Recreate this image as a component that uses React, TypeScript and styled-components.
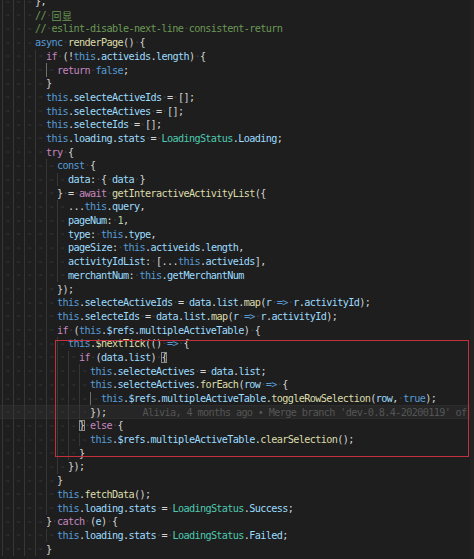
import React from 'react'
import styled, { createGlobalStyle } from 'styled-components'

const Global = createGlobalStyle`
  html, body {
    margin: 0;
    padding: 0;
    background: #1e1e1e;
    overflow: hidden;
  }
`

const colors = {
  kw: '#569cd6',
  ctl: '#c586c0',
  fn: '#dcdcaa',
  id: '#9cdcfe',
  type: '#4ec9b0',
  num: '#b5cea8',
  pun: '#d4d4d4',
  cm: '#6a9955',
  ws: '#3e3e3e',
}

type Kind = keyof typeof colors

const Editor = styled.div`
  position: relative;
  width: 474px;
  height: 559px;
  overflow: hidden;
  background: #1e1e1e;
  font-family: 'DejaVu Sans Mono', 'Liberation Mono', 'Noto Sans CJK SC', monospace;
  font-size: 10.2px;
  letter-spacing: -0.64px;
`

const Lines = styled.div`
  display: flex;
  flex-direction: column;
  margin-top: -5.25px;
`

const Line = styled.div<{ $current?: boolean }>`
  display: flex;
  align-items: center;
  height: 13.7px;
  padding-left: 2px;
  white-space: pre;
  background: ${(p) => (p.$current ? '#262626' : 'transparent')};
  box-shadow: ${(p) => (p.$current ? 'inset 0 1px #2c2c2c, inset 0 -1px #2c2c2c' : 'none')};
`

const Indent = styled.span<{ $active?: boolean }>`
  display: flex;
  align-items: center;
  width: 11px;
  height: 100%;
  flex: none;
  box-sizing: border-box;
  border-left: 1px solid ${(p) => (p.$active ? '#6e6e6e' : '#363636')};
  padding-left: 2px;
  color: #3a3a3a;
  font-size: 7px;
  letter-spacing: 0;
`

const Tok = styled.span<{ $kind: Kind }>`
  color: ${(p) => colors[p.$kind]};
`

const Cjk = styled.span`
  color: ${colors.cm};
  font-family: 'Noto Sans CJK SC', sans-serif;
  font-size: 10px;
  letter-spacing: 0.5px;
`

const Bracket = styled.span`
  color: ${colors.pun};
  outline: 1px solid #8a8a8a;
  outline-offset: -1px;
`

const Blame = styled.span`
  margin-left: 36px;
  color: #555555;
`

const Marker = styled.div`
  position: absolute;
  left: 55px;
  top: 340px;
  width: 414px;
  height: 117px;
  box-sizing: border-box;
  border: 1.5px solid #c3323c;
  pointer-events: none;
`

const Scroll = styled.div`
  position: absolute;
  right: 0;
  top: 0;
  width: 4px;
  height: 100%;
  background: #232323;
`

const keywords = new Set(['async', 'const', 'this', 'false', 'true'])
const control = new Set(['if', 'return', 'try', 'await', 'catch', 'else'])
const types = new Set(['LoadingStatus'])

type Row = {
  level: number
  code: string
  comment?: boolean
  active?: number
  bracket?: 'start' | 'end'
  blame?: string
}

const rows: Row[] = [
  { level: 3, code: '},' },
  { level: 3, code: '// 回显', comment: true },
  { level: 3, code: '// eslint-disable-next-line consistent-return', comment: true },
  { level: 3, code: 'async renderPage() {' },
  { level: 4, code: 'if (!this.activeids.length) {' },
  { level: 5, code: 'return false;', active: 4 },
  { level: 4, code: '}' },
  { level: 4, code: 'this.selecteActiveIds = [];' },
  { level: 4, code: 'this.selecteActives = [];' },
  { level: 4, code: 'this.selecteIds = [];' },
  { level: 4, code: 'this.loading.stats = LoadingStatus.Loading;' },
  { level: 4, code: 'try {' },
  { level: 5, code: 'const {' },
  { level: 6, code: 'data: { data }' },
  { level: 5, code: '} = await getInteractiveActivityList({' },
  { level: 6, code: '...this.query,' },
  { level: 6, code: 'pageNum: 1,' },
  { level: 6, code: 'type: this.type,' },
  { level: 6, code: 'pageSize: this.activeids.length,' },
  { level: 6, code: 'activityIdList: [...this.activeids],' },
  { level: 6, code: 'merchantNum: this.getMerchantNum' },
  { level: 5, code: '});' },
  { level: 5, code: 'this.selecteActiveIds = data.list.map(r => r.activityId);' },
  { level: 5, code: 'this.selecteIds = data.list.map(r => r.activityId);' },
  { level: 5, code: 'if (this.$refs.multipleActiveTable) {' },
  { level: 6, code: 'this.$nextTick(() => {' },
  { level: 7, code: 'if (data.list) {', bracket: 'end' },
  { level: 8, code: 'this.selecteActives = data.list;' },
  { level: 8, code: 'this.selecteActives.forEach(row => {' },
  { level: 9, code: 'this.$refs.multipleActiveTable.toggleRowSelection(row, true);', active: 8 },
  {
    level: 8,
    code: '});',
    blame: "Alivia, 4 months ago \u2022 Merge branch 'dev-0.8.4-20200119' of",
  },
  { level: 7, code: '} else {', bracket: 'start' },
  { level: 8, code: 'this.$refs.multipleActiveTable.clearSelection();' },
  { level: 7, code: '}' },
  { level: 6, code: '});' },
  { level: 5, code: '}' },
  { level: 5, code: 'this.fetchData();' },
  { level: 5, code: 'this.loading.stats = LoadingStatus.Success;' },
  { level: 4, code: '} catch (e) {' },
  { level: 5, code: 'this.loading.stats = LoadingStatus.Failed;' },
  { level: 4, code: '}' },
]

const lex = (code: string) => code.match(/\s+|[A-Za-z_$][\w$]*|\d+|=>|\.\.\.|[^\sA-Za-z_$\d]/g) || []

const Spaces = ({ text }: { text: string }) => (
  <Tok $kind="ws">{'\u00b7'.repeat(text.length)}</Tok>
)

const Comment = ({ code }: { code: string }) => (
  <>
    {code.split(/(\s+|[\u4e00-\u9fff]+)/).filter(Boolean).map((part, i) =>
      /^\s+$/.test(part) ? (
        <Spaces key={i} text={part} />
      ) : /[\u4e00-\u9fff]/.test(part) ? (
        <Cjk key={i}>{part}</Cjk>
      ) : (
        <Tok key={i} $kind="cm">
          {part}
        </Tok>
      )
    )}
  </>
)

const Code = ({ row }: { row: Row }) => {
  const parts = lex(row.code)
  return (
    <>
      {parts.map((part, i) => {
        if (/^\s+$/.test(part)) return <Spaces key={i} text={part} />
        const isEdge = row.bracket === 'end' ? i === parts.length - 1 : row.bracket === 'start' && i === 0
        if (isEdge) return <Bracket key={i}>{part}</Bracket>
        let kind: Kind = 'pun'
        if (keywords.has(part) || part === '=>') kind = 'kw'
        else if (control.has(part)) kind = 'ctl'
        else if (types.has(part)) kind = 'type'
        else if (/^\d+$/.test(part)) kind = 'num'
        else if (/^[A-Za-z_$]/.test(part)) kind = parts[i + 1] === '(' ? 'fn' : 'id'
        return (
          <Tok key={i} $kind={kind}>
            {part}
          </Tok>
        )
      })}
    </>
  )
}

export default function App() {
  return (
    <Editor>
      <Global />
      <Lines>
        {rows.map((row, n) => (
          <Line key={n} $current={!!row.blame}>
            {Array.from({ length: row.level }, (_, i) => (
              <Indent key={i} $active={row.active === i}>
                {'\u2192'}
              </Indent>
            ))}
            {row.comment ? <Comment code={row.code} /> : <Code row={row} />}
            {row.blame && <Blame>{row.blame}</Blame>}
          </Line>
        ))}
      </Lines>
      <Marker />
      <Scroll />
    </Editor>
  )
}
